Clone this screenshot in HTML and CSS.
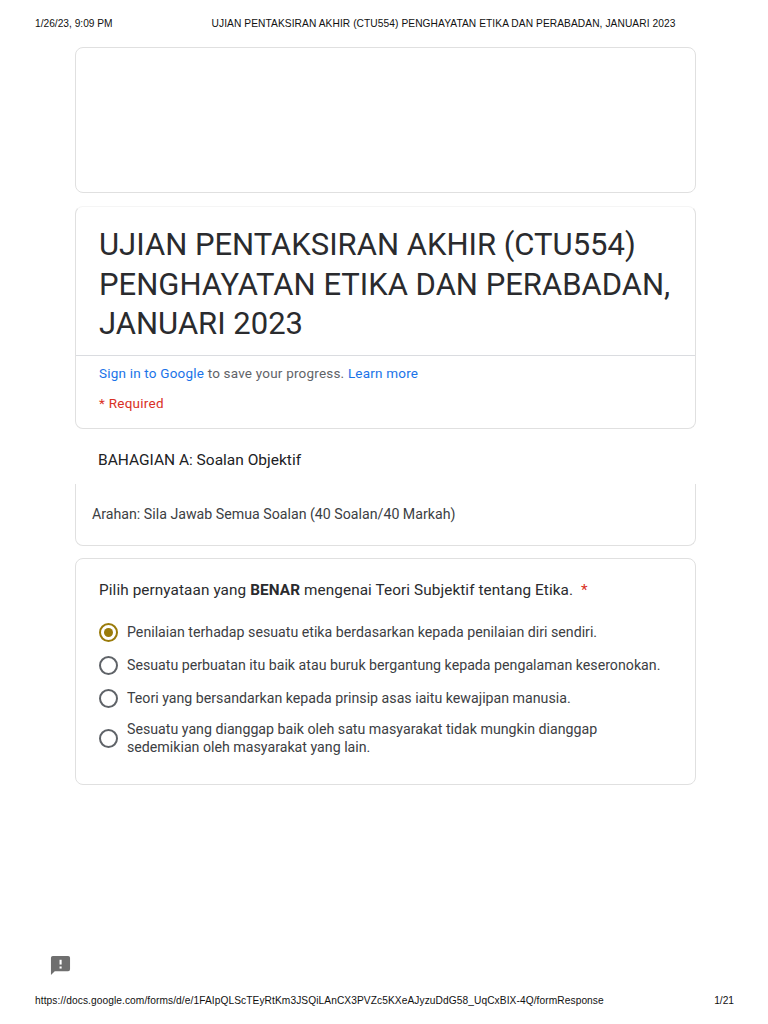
FILE: index.html
```html
<!DOCTYPE html>
<html lang="ms">
<head>
<meta charset="utf-8">
<title>UJIAN PENTAKSIRAN AKHIR (CTU554)</title>
<link rel="stylesheet" href="styles.css">
</head>
<body>
<div class="page">
  <header class="print-head">
    <span>1/26/23, 9:09 PM</span>
    <span class="print-title">UJIAN PENTAKSIRAN AKHIR (CTU554) PENGHAYATAN ETIKA DAN PERABADAN, JANUARI 2023</span>
  </header>
  <main class="column">
    <section class="card banner"></section>
    <section class="card intro">
      <h1 class="form-title">UJIAN PENTAKSIRAN AKHIR (CTU554) PENGHAYATAN ETIKA DAN PERABADAN, JANUARI 2023</h1>
      <div class="intro-foot">
        <p class="signin"><a class="link">Sign in to Google</a> to save your progress. <a class="link">Learn more</a></p>
        <p class="required">* Required</p>
      </div>
    </section>
    <h2 class="section-title">BAHAGIAN A: Soalan Objektif</h2>
    <section class="card directions">
      <p>Arahan: Sila Jawab Semua Soalan (40 Soalan/40 Markah)</p>
    </section>
    <section class="card question">
      <p class="q-text">Pilih pernyataan yang <b>BENAR</b> mengenai Teori Subjektif tentang Etika. <span class="star">*</span></p>
      <ul class="options">
        <li class="option"><span class="radio checked"></span><span>Penilaian terhadap sesuatu etika berdasarkan kepada penilaian diri sendiri.</span></li>
        <li class="option"><span class="radio"></span><span>Sesuatu perbuatan itu baik atau buruk bergantung kepada pengalaman keseronokan.</span></li>
        <li class="option"><span class="radio"></span><span>Teori yang bersandarkan kepada prinsip asas iaitu kewajipan manusia.</span></li>
        <li class="option option-long"><span class="radio"></span><span>Sesuatu yang dianggap baik oleh satu masyarakat tidak mungkin dianggap sedemikian oleh masyarakat yang lain.</span></li>
      </ul>
    </section>
  </main>
  <div class="feedback">
    <svg class="feedback-icon" viewBox="0 0 22 22" width="21" height="21" aria-hidden="true">
      <path fill="#6f6f6f" d="M3 1h16a2 2 0 0 1 2 2v12a2 2 0 0 1-2 2H5l-4 4V3a2 2 0 0 1 2-2z"/>
      <rect x="10" y="5" width="2.2" height="5" fill="#fff"/>
      <rect x="10" y="12" width="2.2" height="2.2" fill="#fff"/>
    </svg>
  </div>
  <footer class="print-foot">
    <span class="print-url">https://docs.google.com/forms/d/e/1FAIpQLScTEyRtKm3JSQiLAnCX3PVZc5KXeAJyzuDdG58_UqCxBIX-4Q/formResponse</span>
    <span>1/21</span>
  </footer>
</div>
</body>
</html>
```
FILE: styles.css
```css
* { box-sizing: border-box; }
html, body { margin: 0; padding: 0; background: #fff; }
body { font-family: Roboto, "Liberation Sans", sans-serif; color: #202124; }
.page { width: 768px; height: 1024px; display: flex; flex-direction: column; overflow: hidden; }

.print-head, .print-foot {
  font-family: "Liberation Sans", Arial, sans-serif;
  font-size: 10.2px;
  color: #111;
  display: flex;
}
.print-head { padding: 17px 0 0 35px; height: 47px; line-height: 13px; }
.print-title { margin-left: 99px; white-space: nowrap; letter-spacing: 0.08px; }
.print-url { letter-spacing: 0.08px; }

.column { width: 621px; margin-left: 75px; display: flex; flex-direction: column; }
.card { background: #fff; border: 1px solid #e0e0e0; border-radius: 8px; }
.banner { height: 146px; }
.intro { margin-top: 13px; height: 223px; border-top-color: #f5f5f5; }
.form-title {
  margin: 0;
  padding: 18px 23px 11px;
  font-size: 31px;
  font-weight: 400;
  line-height: 39.5px;
  color: #2a2b2e;
  border-bottom: 1px solid #dadce0;
}
.intro-foot { padding: 8px 23px 0; font-size: 13.5px; line-height: 18px; letter-spacing: 0.2px; }
.intro-foot p { margin: 0; }
.signin { color: #5f6368; }
.link { color: #1a73e8; }
.intro-foot .required { color: #d93025; margin-top: 12px; letter-spacing: 0.25px; }

.section-title {
  margin: 0;
  padding: 21px 0 14px 23px;
  height: 55px;
  font-size: 15.5px;
  font-weight: 400;
  line-height: 20px;
  color: #202124;
}
.directions { height: 62px; border-top: 0; border-radius: 0 0 8px 8px; padding: 21px 0 0 16px; font-size: 14.2px; line-height: 19px; color: #3c4043; }
.directions p { margin: 0; }

.question { margin-top: 12px; height: 227px; padding: 21px 23px 0; }
.q-text { margin: 0; font-size: 15.3px; line-height: 20px; color: #2a2b2e; letter-spacing: 0.1px; }
.q-text b { font-weight: 700; }
.star { color: #d93025; margin-left: 4px; }
.options { list-style: none; margin: 22px 0 0; padding: 0; display: flex; flex-direction: column; gap: 13px; }
.option { display: flex; align-items: center; gap: 9px; font-size: 14.2px; line-height: 18px; color: #3c4043; min-height: 20px; width: 562px; }
.option-long { margin-top: -1px; }
.radio { flex: none; width: 19px; height: 19px; border: 2px solid #5f6368; border-radius: 50%; display: flex; align-items: center; justify-content: center; }
.radio.checked { border-color: #9a7b0a; }
.radio.checked::after { content: ""; width: 9px; height: 9px; border-radius: 50%; background: #9a7b0a; }

.feedback { flex: 1; display: flex; align-items: flex-end; padding: 0 0 18px 50px; }
.feedback-icon { display: block; }
.print-foot { justify-content: space-between; padding: 0 34px 17px 35px; line-height: 13px; }
```
